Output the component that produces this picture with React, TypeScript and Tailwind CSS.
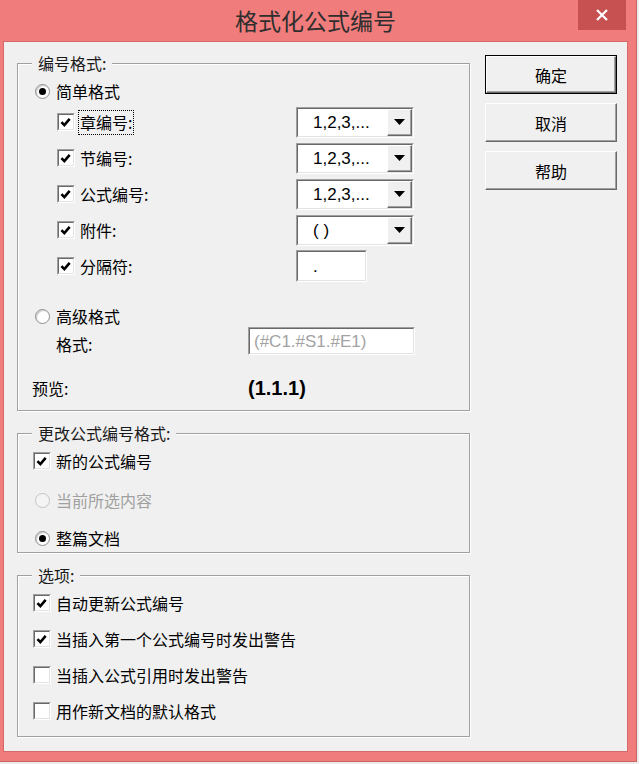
import type { ReactNode } from "react";

const latin = "font-['Liberation_Sans','Noto_Sans_CJK_SC',sans-serif]";

function Sunken({ className, children }: { className: string; children?: ReactNode }) {
  return (
    <div
      className={
        "flex border border-t-[#a0a0a0] border-l-[#a0a0a0] border-r-white border-b-white " + className
      }
    >
      <div className="flex flex-1 items-center border border-t-[#696969] border-l-[#696969] border-r-[#e3e3e3] border-b-[#e3e3e3] bg-white">
        {children}
      </div>
    </div>
  );
}

function Check({ checked }: { checked: boolean }) {
  return (
    <Sunken className="h-[18px] w-[18px] shrink-0">
      {checked && (
        <svg viewBox="0 0 10 10" className="ml-[1px] h-[11px] w-[11px]">
          <path d="M1.3 4.6 L4 7.4 L8.8 1.8" fill="none" stroke="#000" strokeWidth="2.4" />
        </svg>
      )}
    </Sunken>
  );
}

function Radio({ checked, disabled }: { checked?: boolean; disabled?: boolean }) {
  return (
    <span
      className={
        "flex h-[15px] w-[15px] shrink-0 items-center justify-center rounded-full border " +
        (disabled
          ? "border-[#c4c4c4] bg-[#f4f4f4]"
          : "border-[#8e8e8e] bg-white shadow-[inset_1px_1px_1px_#c8c8c8]")
      }
    >
      {checked && <span className="h-[7px] w-[7px] rounded-full bg-black" />}
    </span>
  );
}

function Dropdown({ value }: { value: string }) {
  return (
    <Sunken className="h-[31px] w-[118px]">
      <span className={"flex-1 pl-[15px] text-[17px] leading-none text-black " + latin}>{value}</span>
      <span className="flex h-full w-[25px] items-center justify-center border border-t-white border-l-white border-r-[#696969] border-b-[#696969] bg-[#f0f0f0] shadow-[inset_-1px_-1px_0_#a0a0a0]">
        <svg viewBox="0 0 11 6" className="h-[6px] w-[11px]">
          <polygon points="0,0 11,0 5.5,6" fill="#000" />
        </svg>
      </span>
    </Sunken>
  );
}

function Group({ label, className, children }: { label: string; className?: string; children: ReactNode }) {
  return (
    <fieldset
      className={
        "w-[453px] border border-[#a0a0a0] shadow-[1px_1px_0_#fff,inset_1px_1px_0_#fff] " + (className ?? "")
      }
    >
      <legend className="ml-[14px] h-[21px] bg-[#f0f0f0] px-[6px] text-[16px] leading-[21px] text-[#1a1a1a]">
        {label}
      </legend>
      {children}
    </fieldset>
  );
}

function Button({ label, primary }: { label: string; primary?: boolean }) {
  return (
    <div className={"h-[39px] w-[132px] " + (primary ? "border border-black" : "")}>
      <div className="flex h-full items-center justify-center border border-t-white border-l-white border-r-[#696969] border-b-[#696969] bg-[#f0f0f0] text-[16px] text-black shadow-[inset_-1px_-1px_0_#a0a0a0]">
        {label}
      </div>
    </div>
  );
}

const numberRows = [
  { label: "章编号:", kind: "drop", value: "1,2,3,...", focus: true },
  { label: "节编号:", kind: "drop", value: "1,2,3,..." },
  { label: "公式编号:", kind: "drop", value: "1,2,3,..." },
  { label: "附件:", kind: "drop", value: "( )" },
  { label: "分隔符:", kind: "text", value: "." },
];

const options = [
  { label: "自动更新公式编号", checked: true },
  { label: "当插入第一个公式编号时发出警告", checked: true },
  { label: "当插入公式引用时发出警告", checked: false },
  { label: "用作新文档的默认格式", checked: false },
];

export default function App() {
  return (
    <div className="h-[764px] w-[639px] bg-[#ececec] font-['Noto_Sans_CJK_SC',sans-serif]">
      <div className="h-[762px] w-[637px] border-r border-b border-[#c96464] bg-[#f07c7c]">
        {/* title bar */}
        <div className="flex h-[42px] items-start pl-[53px]">
          <div className="flex-1 pt-[3px] text-center text-[23px] leading-[34px] text-[#2e2e2e]">格式化公式编号</div>
          <div className="mr-[10px] flex h-[30px] w-[48px] items-center justify-center bg-[#c75050]">
            <svg viewBox="0 0 12 12" className="h-[12px] w-[12px]">
              <path d="M1 1 L11 11 M11 1 L1 11" stroke="#fff" strokeWidth="2.2" />
            </svg>
          </div>
        </div>

        {/* client area */}
        <div className="ml-[4px] flex h-[709px] w-[623px] bg-[#f0f0f0] pt-[11px] pr-[10px] pl-[13px] shadow-[0_0_0_1px_#d66a6a]">
          <div className="flex flex-col">
            <Group label="编号格式:" className="pb-[8px]">
              <div className="flex flex-col text-[16px] text-black">
                <div className="mt-[3px] flex h-[28px] items-center pl-[17px]">
                  <Radio checked />
                  <span className="ml-[6px]">简单格式</span>
                </div>
                <div className="mt-[1px] flex flex-col gap-[4px]">
                  {numberRows.map((r) => (
                    <div key={r.label} className="flex h-[32px] items-center pl-[39px]">
                      <div className="flex w-[239px] items-center">
                        <Check checked />
                        <span
                          className={
                            "ml-[3px] border border-dotted px-[1px] leading-[23px] " +
                            (r.focus ? "border-black" : "border-transparent")
                          }
                        >
                          {r.label}
                        </span>
                      </div>
                      {r.kind === "drop" ? (
                        <Dropdown value={r.value} />
                      ) : (
                        <Sunken className="h-[32px] w-[71px]">
                          <span className={"pl-[15px] text-[17px] leading-none " + latin}>{r.value}</span>
                        </Sunken>
                      )}
                    </div>
                  ))}
                </div>
                <div className="mt-[23px] flex h-[22px] items-center pl-[17px]">
                  <Radio />
                  <span className="ml-[6px]">高级格式</span>
                </div>
                <div className="flex h-[28px] items-center pl-[38px]">
                  <span className="w-[192px] pt-[5px]">格式:</span>
                  <Sunken className="h-[28px] w-[167px]">
                    <span className={"pl-[4px] text-[17px] leading-none text-[#a3a3a3] " + latin}>(#C1.#S1.#E1)</span>
                  </Sunken>
                </div>
                <div className="mt-[19px] flex h-[28px] items-center pl-[14px]">
                  <span className="w-[216px]">预览:</span>
                  <span className={"text-[20px] font-semibold leading-none " + latin}>(1.1.1)</span>
                </div>
              </div>
            </Group>

            <Group label="更改公式编号格式:" className="mt-[12px] pb-[2px]">
              <div className="flex flex-col text-[16px] text-black">
                <div className="mt-[5px] flex h-[24px] items-center pl-[15px]">
                  <Check checked />
                  <span className="ml-[5px]">新的公式编号</span>
                </div>
                <div className="mt-[15px] flex h-[24px] items-center pl-[17px]">
                  <Radio disabled />
                  <span className="ml-[6px] text-[#a0a0a0]">当前所选内容</span>
                </div>
                <div className="mt-[14px] flex h-[24px] items-center pl-[17px]">
                  <Radio checked />
                  <span className="ml-[6px]">整篇文档</span>
                </div>
              </div>
            </Group>

            <Group label="选项:" className="mt-[12px] pb-[13px]">
              <div className="mt-[5px] flex flex-col gap-[12px] text-[16px] text-black">
                {options.map((o) => (
                  <div key={o.label} className="flex h-[24px] items-center pl-[15px]">
                    <Check checked={o.checked} />
                    <span className="ml-[5px]">{o.label}</span>
                  </div>
                ))}
              </div>
            </Group>
          </div>

          <div className="ml-[15px] flex flex-col gap-[9px] pt-[2px]">
            <Button label="确定" primary />
            <Button label="取消" />
            <Button label="帮助" />
          </div>
        </div>
      </div>
    </div>
  );
}
